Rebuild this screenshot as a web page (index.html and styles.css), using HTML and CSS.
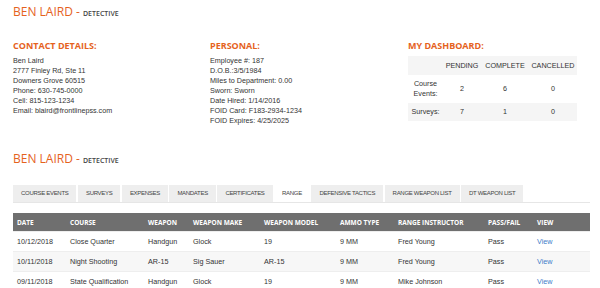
FILE: index.html
```html
<!DOCTYPE html>
<html lang="en">
<head>
    <meta charset="UTF-8">
    <meta name="viewport" content="width=device-width, initial-scale=1.0">
    <title>Ben Laird - Detective</title>
    <link rel="stylesheet" href="styles.css">
</head>
<body>
    <h1 class="name">BEN LAIRD - <span class="rank">Detective</span></h1>

    <div class="details">
        <div class="block">
            <h3>Contact Details:</h3>
            <p>Ben Laird<br>
            2777 Finley Rd, Ste 11<br>
            Downers Grove 60515<br>
            Phone: 630-745-0000<br>
            Cell: 815-123-1234<br>
            Email: blaird@frontlinepss.com</p>
        </div>
        <div class="block">
            <h3>Personal:</h3>
            <p>Employee #: 187<br>
            D.O.B.:3/5/1984<br>
            Miles to Department: 0.00<br>
            Sworn: Sworn<br>
            Date Hired: 1/14/2016<br>
            FOID Card: F183-2934-1234<br>
            FOID Expires: 4/25/2025</p>
        </div>
        <div class="block">
            <h3>My Dashboard:</h3>
            <table class="dash">
                <colgroup>
                    <col class="c-label"><col class="c-num"><col class="c-wide"><col class="c-wide">
                </colgroup>
                <tr>
                    <th></th>
                    <th>PENDING</th>
                    <th>COMPLETE</th>
                    <th>CANCELLED</th>
                </tr>
                <tr>
                    <td class="label">Course Events:</td>
                    <td>2</td>
                    <td>6</td>
                    <td>0</td>
                </tr>
                <tr>
                    <td class="label">Surveys:</td>
                    <td>7</td>
                    <td>1</td>
                    <td>0</td>
                </tr>
            </table>
        </div>
    </div>

    <h1 class="name second">BEN LAIRD - <span class="rank">Detective</span></h1>

    <ul class="tabs">
        <li>Course Events</li>
        <li>Surveys</li>
        <li>Expenses</li>
        <li>Mandates</li>
        <li>Certificates</li>
        <li class="active">Range</li>
        <li>Defensive Tactics</li>
        <li>Range Weapon List</li>
        <li>DT Weapon List</li>
    </ul>

    <table class="range">
        <colgroup>
            <col class="w-date"><col class="w-course"><col class="w-weapon"><col class="w-make">
            <col class="w-model"><col class="w-ammo"><col class="w-instr"><col class="w-pass"><col class="w-view">
        </colgroup>
        <thead>
            <tr>
                <th>DATE</th>
                <th>COURSE</th>
                <th>WEAPON</th>
                <th>WEAPON MAKE</th>
                <th>WEAPON MODEL</th>
                <th>AMMO TYPE</th>
                <th>RANGE INSTRUCTOR</th>
                <th>PASS/FAIL</th>
                <th>VIEW</th>
            </tr>
        </thead>
        <tbody>
            <tr>
                <td>10/12/2018</td>
                <td>Close Quarter</td>
                <td>Handgun</td>
                <td>Glock</td>
                <td>19</td>
                <td>9 MM</td>
                <td>Fred Young</td>
                <td>Pass</td>
                <td><a href="#">View</a></td>
            </tr>
            <tr>
                <td>10/11/2018</td>
                <td>Night Shooting</td>
                <td>AR-15</td>
                <td>Sig Sauer</td>
                <td>AR-15</td>
                <td>9 MM</td>
                <td>Fred Young</td>
                <td>Pass</td>
                <td><a href="#">View</a></td>
            </tr>
            <tr>
                <td>09/11/2018</td>
                <td>State Qualification</td>
                <td>Handgun</td>
                <td>Glock</td>
                <td>19</td>
                <td>9 MM</td>
                <td>Mike Johnson</td>
                <td>Pass</td>
                <td><a href="#">View</a></td>
            </tr>
        </tbody>
    </table>
</body>
</html>
```

FILE: styles.css
```css
body {
    margin: 0;
    padding: 0 10px 0 13px;
    background: #fff;
    color: #333;
    font-family: 'Liberation Sans', Arial, sans-serif;
    font-size: 7.2px;
}
.name {
    margin: 0;
    font-family: 'Open Sans', sans-serif;
    font-weight: 400;
    font-size: 12px;
    line-height: 24px;
    color: #e5621d;
}
.name .rank {
    font-size: 7px;
    font-weight: 600;
    color: #444;
    text-transform: uppercase;
}
.name.second {
    margin-top: 21px;
}

.details {
    display: grid;
    grid-template-columns: 197px 198px 1fr;
    margin-top: 14px;
}
.block h3 {
    margin: 0 0 4px 0;
    font-family: 'Open Sans', sans-serif;
    font-weight: 700;
    font-size: 9px;
    line-height: 12px;
    color: #e5621d;
    text-transform: uppercase;
}
.block p {
    margin: 0;
    line-height: 10px;
}

.dash {
    width: 169px;
    border-collapse: collapse;
    table-layout: fixed;
}
.dash .c-label { width: 35px; }
.dash .c-num { width: 38px; }
.dash .c-wide { width: 48px; }
.dash th, .dash td {
    padding: 4px 2px;
    line-height: 10px;
    font-weight: 400;
    text-align: center;
}
.dash tr:nth-child(odd) {
    background: #f5f5f5;
}
.dash th {
    padding-top: 5px;
}

.tabs {
    display: flex;
    gap: 1.5px;
    margin: 12px 0 0 0;
    padding: 0;
    list-style: none;
    width: 577px;
    border-bottom: 1px solid #e6e6e6;
}
.tabs li {
    padding: 0 8px;
    line-height: 17px;
    background: #eee;
    font-size: 6px;
    letter-spacing: -0.3px;
    text-transform: uppercase;
    color: #444;
}
.tabs li.active {
    background: #fff;
}

.range {
    width: 577px;
    margin-top: 10px;
    border-collapse: collapse;
    table-layout: fixed;
}
.range .w-date { width: 53px; }
.range .w-course { width: 78px; }
.range .w-weapon { width: 45px; }
.range .w-make { width: 71px; }
.range .w-model { width: 76px; }
.range .w-ammo { width: 58px; }
.range .w-instr { width: 90px; }
.range .w-pass { width: 49px; }
.range .w-view { width: 57px; }
.range th {
    background: #6f6f6f;
    color: #fff;
    font-family: 'Open Sans', sans-serif;
    font-weight: 700;
    font-size: 6.5px;
    text-align: left;
    height: 18px;
    padding: 0 4px;
}
.range td {
    height: 19px;
    padding: 0 4px;
    border-top: 1px solid #eee;
}
.range tbody tr:nth-child(even) {
    background: #f7f7f7;
}
.range a {
    color: #3b7cc9;
    text-decoration: none;
}
```
